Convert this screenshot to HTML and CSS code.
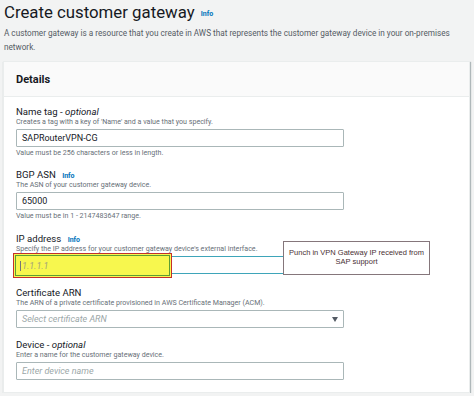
FILE: index.html
```html
<!DOCTYPE html>
<html lang="en">

<head>
    <meta charset="UTF-8">
    <meta name="viewport" content="width=device-width, initial-scale=1.0">
    <title>Create customer gateway</title>
    <link rel="stylesheet" href="styles.css">
</head>

<body>
    <div class="page">
        <h1 class="page-title">Create customer gateway <a class="info" href="#">Info</a></h1>
        <p class="page-desc">A customer gateway is a resource that you create in AWS that represents the customer gateway device in your on&#8209;premises network.</p>

        <section class="panel">
            <div class="panel-header">
                <h2>Details</h2>
            </div>

            <div class="panel-body">
                <div class="field">
                    <label class="field-label">Name tag - <i>optional</i></label>
                    <div class="field-hint">Creates a tag with a key of 'Name' and a value that you specify.</div>
                    <div class="input">SAPRouterVPN-CG</div>
                    <div class="field-hint field-constraint">Value must be 256 characters or less in length.</div>
                </div>

                <div class="field">
                    <label class="field-label">BGP ASN <a class="info" href="#">Info</a></label>
                    <div class="field-hint">The ASN of your customer gateway device.</div>
                    <div class="input">65000</div>
                    <div class="field-hint field-constraint">Value must be in 1 - 2147483647 range.</div>
                </div>

                <div class="field field-ip">
                    <label class="field-label">IP address <a class="info" href="#">Info</a></label>
                    <div class="field-hint">Specify the IP address for your customer gateway device's external interface.</div>
                    <div class="input input-focus"></div>

                    <!-- annotation drawn over the screenshot -->
                    <div class="highlight">
                        <div class="highlight-inner"><span class="caret"></span>1.1.1.1</div>
                    </div>
                    <div class="callout">Punch in VPN Gateway IP received from<br>SAP support</div>
                </div>

                <div class="field">
                    <label class="field-label">Certificate ARN</label>
                    <div class="field-hint">The ARN of a private certificate provisioned in AWS Certificate Manager (ACM).</div>
                    <div class="input input-select">
                        <span class="placeholder">Select certificate ARN</span>
                        <span class="arrow"></span>
                    </div>
                </div>

                <div class="field">
                    <label class="field-label">Device - <i>optional</i></label>
                    <div class="field-hint">Enter a name for the customer gateway device.</div>
                    <div class="input"><span class="placeholder">Enter device name</span></div>
                </div>
            </div>
        </section>
    </div>
</body>

</html>
```

FILE: styles.css
```css
* {
    margin: 0;
    padding: 0;
    box-sizing: border-box;
}

body {
    font-family: Roboto, "Open Sans", Arial, sans-serif;
    background-color: #f2f3f3;
    color: #16191f;
}

.page {
    padding: 0 4px 0 3px;
}

a.info {
    color: #0073bb;
    font-weight: 700;
    text-decoration: none;
    font-size: 7px;
    line-height: 1;
}

.page-title {
    font-size: 16.8px;
    font-weight: 400;
    line-height: 24px;
    padding-left: 1px;
}

.page-title .info {
    margin-left: 2px;
    vertical-align: 2px;
}

.page-desc {
    font-size: 8.2px;
    line-height: 14px;
    color: #545b64;
    margin-top: 2px;
    padding-left: 1px;
}

.panel {
    margin-top: 7px;
    background-color: #fff;
    border: 1px solid #eaeded;
    box-shadow: 1px 1px 1px rgba(0, 28, 36, 0.25), 0 1px 1px rgba(0, 28, 36, 0.2);
}

.panel-header {
    height: 35px;
    background-color: #fafafa;
    border-bottom: 1px solid #eaeded;
    display: flex;
    align-items: center;
    padding-left: 12px;
}

.panel-header h2 {
    font-size: 11px;
    font-weight: 700;
}

.panel-body {
    padding: 9px 12px 12px;
    display: flex;
    flex-direction: column;
    gap: 11px;
}

.field {
    position: relative;
}

.field-ip {
    margin: 1px 0 2px;
}

.field-label {
    display: block;
    font-size: 9.6px;
    line-height: 11px;
}

.field-label .info {
    margin-left: 4px;
}

.field-hint {
    font-size: 7.1px;
    line-height: 10px;
    color: #687078;
}

.field-constraint {
    margin-top: 1px;
}

.input {
    width: 328px;
    height: 18px;
    margin-top: 2px;
    border: 1px solid #aab7b8;
    border-radius: 1px;
    font-size: 9px;
    line-height: 16px;
    padding-left: 5px;
    display: flex;
    align-items: center;
}

.input-focus {
    border-color: #3ea5b9;
    border-width: 1.5px;
}

.input-select {
    justify-content: space-between;
    padding-right: 5px;
}

.placeholder {
    color: #9ba7a8;
    font-style: italic;
}

.arrow {
    width: 0;
    height: 0;
    border-left: 3px solid transparent;
    border-right: 3px solid transparent;
    border-top: 5px solid #545b64;
}

/* yellow marker box over the IP input */
.highlight {
    position: absolute;
    left: -3px;
    top: 20px;
    width: 159px;
    height: 25px;
    border: 1.5px solid #c4302b;
    background-color: #f7f74e;
    padding: 1px;
}

.highlight-inner {
    height: 100%;
    border: 1px solid #5c9e34;
    font-size: 9px;
    font-style: italic;
    color: #a3a37a;
    display: flex;
    align-items: center;
    padding-left: 4px;
}

.caret {
    width: 1px;
    height: 10px;
    background-color: #777;
    margin-right: 1px;
}

.callout {
    position: absolute;
    left: 267px;
    top: 8px;
    width: 147px;
    height: 34px;
    border: 1.5px solid #85767b;
    background-color: #fff;
    font-family: "Liberation Sans", Arial, sans-serif;
    font-size: 7.5px;
    line-height: 8.6px;
    color: #4a3034;
    text-align: center;
    padding-top: 7px;
}
```
